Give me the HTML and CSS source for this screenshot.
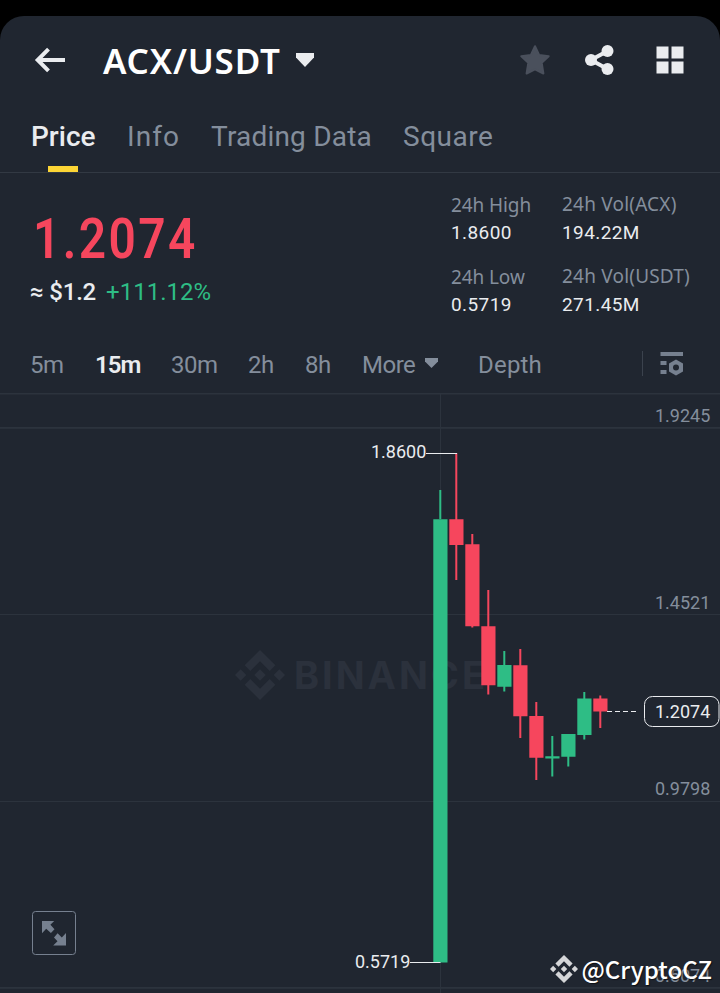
FILE: index.html
```html
<!DOCTYPE html>
<html lang="en">
<head>
    <meta charset="UTF-8">
    <meta name="viewport" content="width=device-width, initial-scale=1.0">
    <title>ACX/USDT</title>
    <link rel="stylesheet" href="styles.css">
</head>
<body>
    <div class="panel">
        <header class="topbar">
            <svg class="back" width="32" height="26" viewBox="0 0 32 26">
                <path d="M31 13H5M14.5 2.2L3.7 13l10.8 10.8" fill="none" stroke="#eaecef" stroke-width="4"/>
            </svg>
            <h1 class="pair">ACX/USDT</h1>
            <svg class="caret" width="18" height="14" viewBox="0 0 18 14">
                <path d="M0 0h18v4.6L9 14 0 4.6z" fill="#eaecef"/>
            </svg>
            <div class="actions">
                <svg width="30" height="30" viewBox="0 0 30 30">
                    <path d="M15 1.2l4.1 8.7 9.6 1.3-7 6.6 1.7 10.7-8.4-4.2-8.4 4.2 1.7-10.7-7-6.6 9.6-1.3z" fill="#4a505c" stroke="#4a505c" stroke-width="2" stroke-linejoin="round"/>
                </svg>
                <svg width="30" height="30" viewBox="0 0 30 30">
                    <path d="M22.500 6L6 15l16.500 9" fill="none" stroke="#eaecef" stroke-width="4"/>
                    <circle cx="22.500" cy="6" r="6" fill="#eaecef"/>
                    <circle cx="6" cy="15" r="6" fill="#eaecef"/>
                    <circle cx="22.500" cy="24" r="6" fill="#eaecef"/>
                </svg>
                <svg width="28" height="28" viewBox="0 0 28 28">
                    <path d="M.5.5h12v12H.5zM15.500.5h12v12h-12zM.5 15.500h12v12H.5zM15.500 15.500h12v12h-12z" fill="#eaecef"/>
                </svg>
            </div>
        </header>

        <nav class="tabs">
            <a class="tab active"><span class="price-tab">Price</span></a>
            <a class="tab"><span class="info-tab">Info</span></a>
            <a class="tab"><span class="data-tab">Trading Data</span></a>
            <a class="tab"><span class="square-tab">Square</span></a>
        </nav>

        <section class="summary">
            <div class="quote">
                <div class="last">1.2074</div>
                <div class="sub">
                    <span class="usd">≈ $1.2</span>
                    <span class="change">+111.12%</span>
                </div>
            </div>
            <dl class="stats">
                <div><dt>24h High</dt><dd>1.8600</dd></div>
                <div><dt>24h Low</dt><dd>0.5719</dd></div>
            </dl>
            <dl class="stats volume">
                <div><dt>24h Vol(ACX)</dt><dd>194.22M</dd></div>
                <div><dt>24h Vol(USDT)</dt><dd>271.45M</dd></div>
            </dl>
        </section>

        <nav class="intervals">
            <span class="m5">5m</span>
            <span class="m15 selected">15m</span>
            <span class="m30">30m</span>
            <span class="h2">2h</span>
            <span class="h8">8h</span>
            <span class="more">More</span>
            <svg class="more-caret" width="13" height="10" viewBox="0 0 13 10">
                <path d="M0 0h13v3.500L6.500 10 0 3.500z" fill="#848e9c"/>
            </svg>
            <span class="depth">Depth</span>
            <svg class="settings" width="24" height="25" viewBox="0 0 24 25">
                <path d="M.5 1h22.500v4H.5zM.5 10h6v4h-6zM.5 19h6v4h-6z" fill="#76808f"/>
                <path fill-rule="evenodd" d="M16 8.500l7 4v8l-7 4-7-4v-8zM16 13.500a3 3 0 1 0 0 6 3 3 0 0 0 0-6z" fill="#76808f"/>
            </svg>
        </nav>

        <div class="chart">
            <svg width="720" height="600" viewBox="0 393 720 600">
                <defs>
                    <symbol id="logo" viewBox="0 0 126.610 126.610">
                        <path d="M38.730 53.200l24.590-24.580 24.600 24.600 14.300-14.310L63.320 0l-38.900 38.900zM0 63.310L14.300 49l14.310 14.310-14.310 14.300zM38.730 73.410L63.320 98l24.600-24.600 14.310 14.290-38.900 38.910-38.910-38.880zM98 63.310L112.300 49l14.310 14.300-14.310 14.320zM77.830 63.300L63.320 48.780 48.790 63.300l14.530 14.520z"/>
                    </symbol>
                </defs>

                <!-- grid -->
                <g class="grid">
                    <rect x="0" y="393" width="720" height="1.500"/>
                    <rect x="0" y="427" width="720" height="1.800"/>
                    <rect x="0" y="614" width="720" height="1"/>
                    <rect x="0" y="801" width="720" height="1"/>
                    <rect x="0" y="987" width="720" height="1.800"/>
                    <rect x="440" y="394" width="1" height="599"/>
                </g>

                <!-- watermark -->
                <g class="mark">
                    <use href="#logo" x="235" y="650" width="50" height="50"/>
                    <text x="294" y="689" textLength="191">BINANCE</text>
                </g>

                <!-- candles -->
                <g class="up">
                    <path d="M439.300 490h2v29h-2zM433.300 519.300h14.200v443.300h-14.200z"/>
                    <path d="M503.300 651h2v40.500h-2zM497.300 665h14.200v21.700h-14.200z"/>
                    <path d="M551.300 736h2v40.500h-2zM545.300 756.300h14.200v2.200h-14.200z"/>
                    <path d="M567.300 734h2v32.500h-2zM561.300 734h14.200v22.700h-14.200z"/>
                    <path d="M583.300 692h2v47.500h-2zM577.300 698.500h14.200V735h-14.200z"/>
                </g>
                <g class="down">
                    <path d="M455.300 453h2v127h-2zM449.300 519.300h14.200V545h-14.200z"/>
                    <path d="M471.300 534h2v93.500h-2zM465.300 544.300h14.200v82h-14.200z"/>
                    <path d="M487.300 590h2v104.500h-2zM481.300 626.300h14.200V685.300h-14.200z"/>
                    <path d="M519.300 649h2v89h-2zM513.300 665.300h14.200v51h-14.200z"/>
                    <path d="M535.300 702h2v78h-2zM529.300 716h14.200v41.700h-14.200z"/>
                    <path d="M599.300 695.500h2V728h-2zM593.300 698.500h14.200v13h-14.200z"/>
                </g>

                <!-- high / low markers -->
                <g class="marker">
                    <path d="M426 453.500h31M410 962.500h30.500"/>
                    <text x="371" y="458">1.8600</text>
                    <text x="355" y="968">0.5719</text>
                </g>

                <!-- price scale -->
                <g class="scale">
                    <text x="655" y="422">1.9245</text>
                    <text x="655" y="609">1.4521</text>
                    <text x="655" y="795">0.9798</text>
                    <text x="655" y="982">0.5074</text>
                </g>

                <!-- current price -->
                <path class="dash" d="M607 711.500h29"/>
                <rect class="current" x="644.500" y="696.500" width="74.500" height="30" rx="8"/>
                <text class="current-text" x="655" y="718">1.2074</text>

                <!-- fullscreen button -->
                <rect x="32.500" y="911.500" width="43" height="43" rx="3" fill="none" stroke="#76808f"/>
                <path d="M42 921h12.200l-3.800 3.800 4.100 4.500-3.600 3.600-4.700-4.100-4.200 4.400zM66 945.500H53.200l4.300-4.300-3.500-3.700 3.600-4.200 4.200 4.200 4.200-4.500z" fill="#76808f"/>
            </svg>
            <div class="author">
                <svg width="28" height="28"><use href="#logo" width="28" height="28"/></svg>
                <span>@CryptoCZ</span>
            </div>
        </div>
    </div>
</body>
</html>
```

FILE: styles.css
```css
body {
    margin: 0;
    background: #000;
    font-family: Roboto, "Liberation Sans", sans-serif;
    color: #eaecef;
}
.panel {
    box-sizing: border-box;
    width: 720px;
    height: 977px;
    margin-top: 16px;
    border-radius: 24px 24px 0 0;
    background: #202630;
    overflow: hidden;
}
.topbar {
    display: flex;
    align-items: center;
    height: 88px;
    padding: 0 36px 0 34px;
}
.back {
    margin-right: 37px;
}
.pair {
    width: 178px;
    margin: 1px 0 0;
    font-family: "Noto Sans", sans-serif;
    font-size: 35px;
    font-weight: 600;
    line-height: 40px;
    letter-spacing: 0.8px;
    color: #fff;
    white-space: nowrap;
}
.caret {
    margin-left: 15px;
}
.actions {
    display: flex;
    align-items: center;
    gap: 35px;
    margin-left: auto;
}
.actions svg:last-child {
    margin-left: 6px;
}
.tabs {
    display: flex;
    gap: 31px;
    height: 68px;
    padding-left: 31px;
    border-bottom: 1px solid #323943;
    font-size: 28px;
    line-height: 65px;
    letter-spacing: 0.5px;
    color: #848e9c;
}
.tab {
    position: relative;
    white-space: nowrap;
}
.tab span {
    display: block;
}
.price-tab { width: 65px; }
.info-tab {
    width: 53px;
    letter-spacing: 1.1px;
}
.data-tab {
    width: 161px;
    letter-spacing: 0.2px;
}
.square-tab { width: 91px; }
.active {
    color: #eaecef;
    font-weight: 500;
    letter-spacing: 0;
}
.active::after {
    content: "";
    position: absolute;
    left: 17px;
    bottom: 0;
    width: 30px;
    height: 6px;
    background: #fcd535;
}
.summary {
    display: flex;
    height: 163px;
    padding-left: 30px;
}
.quote {
    width: 421px;
    padding-top: 34px;
}
.last {
    margin-left: 3px;
    font-size: 55px;
    font-weight: 600;
    line-height: 65px;
    letter-spacing: 2.8px;
    color: #f6465d;
    transform: scaleX(0.87);
    transform-origin: left;
}
.sub {
    display: flex;
    gap: 10px;
    margin-top: 4px;
    font-size: 24px;
    line-height: 32px;
    letter-spacing: -0.2px;
}
.usd {
    font-weight: 500;
}
.change {
    color: #2ebd85;
    letter-spacing: 0;
}
.stats {
    display: flex;
    flex-direction: column;
    gap: 16px;
    width: 111px;
    margin: 0;
    padding-top: 18px;
    font-size: 19px;
    line-height: 28px;
    white-space: nowrap;
}
.stats dt {
    font-family: "Noto Sans", sans-serif;
    letter-spacing: -0.1px;
    color: #848e9c;
}
.stats dd {
    margin: 0;
    letter-spacing: 0.4px;
}
.stats.volume {
    padding-top: 17px;
}
.volume dt {
    letter-spacing: 0.2px;
}
.volume dd {
    padding-top: 1px;
    line-height: 27px;
}
.intervals {
    display: flex;
    align-items: center;
    height: 57px;
    padding-left: 30px;
    font-size: 24px;
    letter-spacing: -0.5px;
    color: #848e9c;
}
.selected {
    font-weight: 600;
    letter-spacing: -1px;
    color: #eaecef;
}
.m5 { width: 65px; }
.m15 { width: 76px; }
.m30 { width: 77px; }
.h2 { width: 57px; }
.h8 { width: 57px; }
.more { width: 63px; }
.more-caret {
    margin: -3px 40px 0 0;
}
.depth {
    width: 164px;
    letter-spacing: 0.2px;
}
.settings {
    margin-top: -2px;
    padding-left: 17px;
    border-left: 1px solid #3b424d;
}
.chart {
    position: relative;
    height: 600px;
}
.chart text {
    font-size: 18px;
}
.grid {
    fill: #2c333d;
}
.mark {
    fill: #2b313c;
}
.chart .mark text {
    font-family: Inter, sans-serif;
    font-size: 38px;
    font-weight: 700;
}
.up {
    fill: #2ebd85;
}
.down {
    fill: #f6465d;
}
.marker path {
    stroke: #eaecef;
}
.marker text, .current-text {
    fill: #eaecef;
}
.scale {
    fill: #848e9c;
}
.dash {
    stroke: #eaecef;
    stroke-dasharray: 5 3;
}
.current {
    fill: #202630;
    stroke: #eaecef;
}
.author {
    position: absolute;
    right: 8px;
    bottom: 6px;
    display: flex;
    align-items: center;
    gap: 4px;
    font-family: "Noto Sans CJK SC", sans-serif;
    font-size: 24px;
    font-weight: 500;
    line-height: 36px;
    color: #fff;
    text-shadow: 1px 1px 1px rgba(0, 0, 0, 0.6);
}
.author svg {
    fill: #d5d6d8;
}
```
